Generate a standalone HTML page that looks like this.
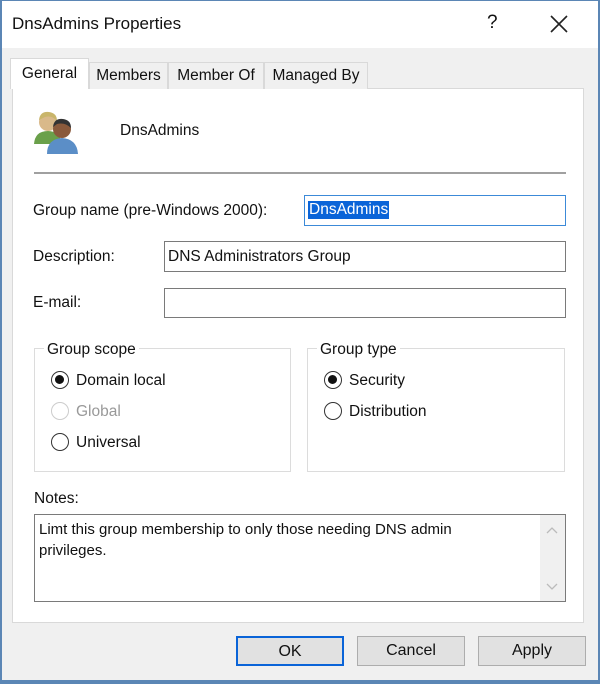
<!DOCTYPE html>
<html><head><style>
*{box-sizing:border-box;margin:0;padding:0}
body{width:600px;height:684px;overflow:hidden;background:#5b86b5;font-family:"Liberation Sans",sans-serif;font-size:15.5px;color:#111;position:relative}
.win{position:absolute;left:0;top:0;width:600px;height:684px;background:#f0f0f0}
.bd{position:absolute;background:#5b86b5}
.title{position:absolute;left:0;top:0;width:600px;height:48px;background:#fff}
.a{position:absolute;white-space:nowrap}
.tab{position:absolute;top:62px;height:27px;border:1px solid #d9d9d9;border-bottom:none;background:#f0f0f0;text-align:center;line-height:25px}
.panel{position:absolute;left:12px;top:88px;width:572px;height:535px;background:#fff;border:1px solid #d9d9d9}
.inp{position:absolute;background:#fff;border:1px solid #7a7a7a}
.grp{position:absolute;border:1px solid #dcdcdc}
.rad{position:absolute;width:18px;height:18px;border-radius:50%;border:1.5px solid #333;background:#fff}
.rad.on::after{content:"";position:absolute;left:3px;top:3px;width:9px;height:9px;border-radius:50%;background:#111}
.btn{position:absolute;top:636px;width:108px;height:30px;border:1px solid #adadad;background:#e1e1e1;text-align:center;line-height:28px;font-size:16px}
</style></head><body>
<div class="win">
<div class="title"></div>
<div class="a" style="left:12px;top:14px;font-size:17px">DnsAdmins Properties</div>
<div class="a" style="left:487px;top:12px;font-size:19px">?</div>
<svg class="a" style="left:550px;top:15px" width="18" height="18"><path d="M1 1L17 17M17 1L1 17" stroke="#222" stroke-width="1.6"/></svg>
<div class="panel"></div>
<div class="tab" style="left:10px;top:58px;width:79px;height:31px;background:#fff;z-index:2;line-height:29px">General</div>
<div class="tab" style="left:89px;width:79px">Members</div>
<div class="tab" style="left:168px;width:96px">Member Of</div>
<div class="tab" style="left:264px;width:104px">Managed By</div>
<svg class="a" style="left:31px;top:108px" width="52" height="48">
<circle cx="17" cy="14" r="9" fill="#d9b98a"/><path d="M8 12Q9 3 18 4Q26 5 26 13Q21 7 14 9Z" fill="#c9b56a"/>
<path d="M3 36Q4 23 17 23Q29 23 31 36Z" fill="#6aa04a"/>
<circle cx="31" cy="21" r="9" fill="#8a5a3c"/><path d="M22 19Q23 10 32 11Q40 12 40 20Q34 14 26 16Z" fill="#333"/>
<path d="M16 46Q16 31 31 30Q46 31 47 46Z" fill="#5b8ec7"/>
</svg>
<div class="a" style="left:120px;top:122px">DnsAdmins</div>
<div class="a" style="left:34px;top:172px;width:532px;height:2px;background:#a0a0a0"></div>
<div class="a" style="left:33px;top:202px">Group name (pre-Windows 2000):</div>
<div class="inp" style="left:304px;top:195px;width:262px;height:31px;border-color:#3c8ad8"></div>
<div class="a" style="left:308px;top:201px;background:#0a64d8;color:#fff;padding:0 1px">DnsAdmins</div>
<div class="a" style="left:33px;top:248px">Description:</div>
<div class="inp" style="left:164px;top:241px;width:402px;height:31px"></div>
<div class="a" style="left:168px;top:248px">DNS Administrators Group</div>
<div class="a" style="left:33px;top:294px">E-mail:</div>
<div class="inp" style="left:164px;top:288px;width:402px;height:30px"></div>
<div class="grp" style="left:34px;top:348px;width:257px;height:124px"></div>
<div class="a" style="left:44px;top:341px;background:#fff;padding:0 3px">Group scope</div>
<div class="rad on" style="left:51px;top:371px"></div><div class="a" style="left:76px;top:372px">Domain local</div>
<div class="rad" style="left:51px;top:402px;border-color:#ccc"></div><div class="a" style="left:76px;top:403px;color:#999">Global</div>
<div class="rad" style="left:51px;top:433px"></div><div class="a" style="left:76px;top:434px">Universal</div>
<div class="grp" style="left:307px;top:348px;width:258px;height:124px"></div>
<div class="a" style="left:317px;top:341px;background:#fff;padding:0 3px">Group type</div>
<div class="rad on" style="left:324px;top:371px"></div><div class="a" style="left:349px;top:372px">Security</div>
<div class="rad" style="left:324px;top:402px"></div><div class="a" style="left:349px;top:403px">Distribution</div>
<div class="a" style="left:34px;top:490px">Notes:</div>
<div class="inp" style="left:34px;top:514px;width:532px;height:88px"></div>
<div class="a" style="left:540px;top:515px;width:25px;height:86px;background:#f0f0f0"></div>
<svg class="a" style="left:545px;top:525px" width="14" height="10"><path d="M2 8L7 3L12 8" stroke="#bbb" fill="none" stroke-width="1.3"/></svg>
<svg class="a" style="left:545px;top:582px" width="14" height="10"><path d="M2 2L7 7L12 2" stroke="#bbb" fill="none" stroke-width="1.3"/></svg>
<div class="a" style="left:39px;top:519px;font-size:15px;line-height:21px">Limt this group membership to only those needing DNS admin<br>privileges.</div>
<div class="btn" style="left:236px;border:2px solid #0a64d8">OK</div>
<div class="btn" style="left:357px">Cancel</div>
<div class="btn" style="left:478px">Apply</div>
<div class="bd" style="left:0;top:0;width:600px;height:1px"></div>
<div class="bd" style="left:0;top:0;width:2px;height:684px"></div>
<div class="bd" style="right:0;top:0;width:2px;height:684px"></div>
<div class="bd" style="left:0;bottom:0;width:600px;height:4px"></div>
</div>
</body></html>
